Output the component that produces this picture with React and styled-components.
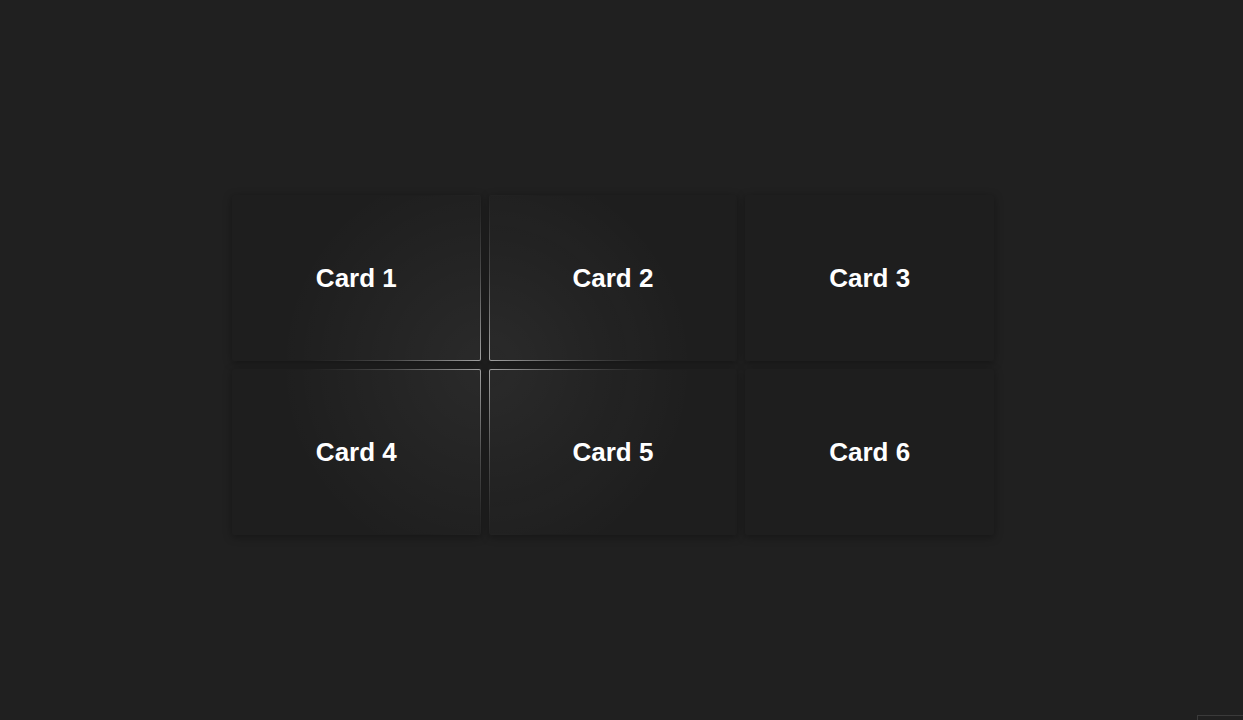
import React, { useState } from 'react'
import styled, { createGlobalStyle } from 'styled-components'

const GlobalStyle = createGlobalStyle`
    html, body {
        margin: 0;
        padding: 0;
        background: #202020;
        font-family: 'Liberation Sans', Arial, Helvetica, sans-serif;
        overflow: hidden;
    }
`

const Page = styled.main`
    display: flex;
    align-items: center;
    justify-content: center;
    min-height: 100vh;
    box-sizing: border-box;
    padding: 10px 17px 0 0;
`

const Grid = styled.div`
    display: grid;
    width: 762px;
    grid-template-columns: repeat(3, 1fr);
    grid-auto-rows: 166px;
    gap: 8px;
`

// glowing border: the frame shows a radial gradient that follows the pointer
const Card = styled.div`
    position: relative;
    padding: 1px;
    border-radius: 2px;
    background:
        radial-gradient(
            230px circle at var(--x) var(--y),
            rgba(255, 255, 255, 0.6),
            rgba(255, 255, 255, 0.2) 40%,
            rgba(255, 255, 255, 0.05) 65%,
            transparent 78%
        ),
        #1e1e1e;
    box-shadow: 0 2px 8px rgba(0, 0, 0, 0.35);
`

const CardBody = styled.div`
    display: flex;
    align-items: center;
    justify-content: center;
    height: 100%;
    border-radius: 1px;
    background:
        radial-gradient(
            260px circle at var(--x) var(--y),
            rgba(255, 255, 255, 0.055),
            transparent 80%
        ),
        #1e1e1e;

    & > h2 {
        margin: 0;
        color: #fff;
        font-size: 26px;
        font-weight: 700;
        letter-spacing: 0;
    }
`

const CornerBox = styled.div`
    position: fixed;
    left: 1197px;
    top: 715px;
    width: 80px;
    height: 40px;
    border-top: 1px solid #3a3a3a;
    border-left: 1px solid #3a3a3a;
`

const CARD_W = (762 - 16) / 3
const CARD_H = 166
const GAP = 8

export default function App() {
    const [pointer, setPointer] = useState({ x: 253, y: 170 })
    const cards = [1, 2, 3, 4, 5, 6]

    const handleMove = (e) => {
        const rect = e.currentTarget.getBoundingClientRect()
        setPointer({ x: e.clientX - rect.left, y: e.clientY - rect.top })
    }

    return (
        <React.Fragment>
            <GlobalStyle />
            <Page>
                <Grid onMouseMove={handleMove}>
                    {cards.map((n, index) => {
                        const col = index % 3
                        const row = Math.floor(index / 3)
                        const x = pointer.x - col * (CARD_W + GAP)
                        const y = pointer.y - row * (CARD_H + GAP)
                        return (
                            <Card
                                key={`card-${n}`}
                                style={{ '--x': `${x}px`, '--y': `${y}px` }}
                            >
                                <CardBody>
                                    <h2>Card {n}</h2>
                                </CardBody>
                            </Card>
                        )
                    })}
                </Grid>
            </Page>
            <CornerBox />
        </React.Fragment>
    )
}
